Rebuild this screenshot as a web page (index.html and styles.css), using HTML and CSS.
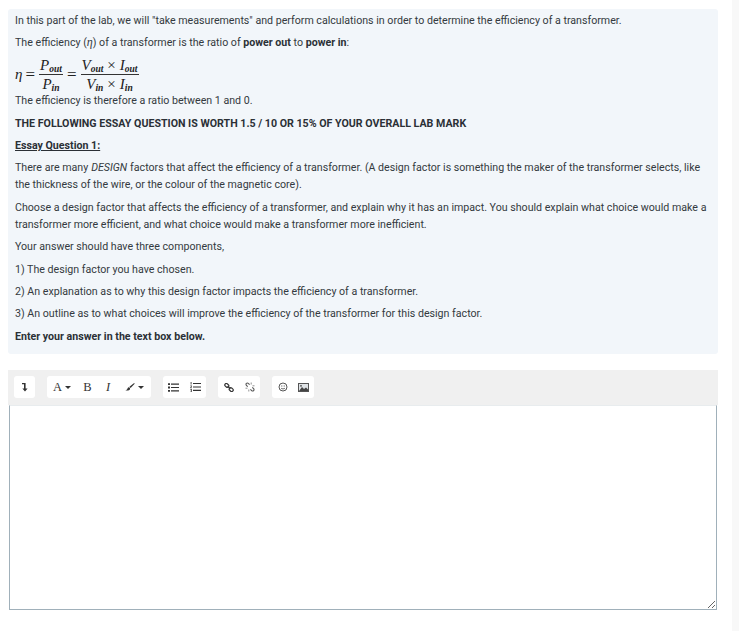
FILE: index.html
```html
<!DOCTYPE html>
<html lang="en">
<head>
    <meta charset="UTF-8">
    <meta name="viewport" content="width=device-width, initial-scale=1.0">
    <title>Essay Question</title>
    <link rel="stylesheet" href="styles.css">
</head>
<body>
    <main class="pagina">
        <section class="questao">
            <p>In this part of the lab, we will "take measurements" and perform calculations in order to determine the efficiency of a transformer.</p>
            <p>The efficiency (<span class="mat">η</span>) of a transformer is the ratio of <strong>power out</strong> to <strong>power in</strong>:</p>

            <div class="formula">
                <span class="mat">η</span>
                <span class="igual">=</span>
                <span class="fracao">
                    <span class="num"><span class="mat">P<sub>out</sub></span></span>
                    <span class="den"><span class="mat">P<sub>in</sub></span></span>
                </span>
                <span class="igual">=</span>
                <span class="fracao">
                    <span class="num"><span class="mat">V<sub>out</sub></span><span class="vezes">×</span><span class="mat">I<sub>out</sub></span></span>
                    <span class="den"><span class="mat">V<sub>in</sub></span><span class="vezes">×</span><span class="mat">I<sub>in</sub></span></span>
                </span>
            </div>

            <p>The efficiency is therefore a ratio between 1 and 0.</p>
            <p><strong>THE FOLLOWING ESSAY QUESTION IS WORTH 1.5 / 10 OR 15% OF YOUR OVERALL LAB MARK</strong></p>
            <p><strong><u>Essay Question 1:</u></strong></p>
            <p>There are many <em>DESIGN</em> factors that affect the efficiency of a transformer. (A design factor is something the maker of the transformer selects, like the thickness of the wire, or the colour of the magnetic core).</p>
            <p>Choose a design factor that affects the efficiency of a transformer, and explain why it has an impact. You should explain what choice would make a transformer more efficient, and what choice would make a transformer more inefficient.</p>
            <p>Your answer should have three components,</p>
            <p>1) The design factor you have chosen.</p>
            <p>2) An explanation as to why this design factor impacts the efficiency of a transformer.</p>
            <p>3) An outline as to what choices will improve the efficiency of the transformer for this design factor.</p>
            <p><strong>Enter your answer in the text box below.</strong></p>
        </section>

        <div class="editor">
            <div class="barra">
                <div class="grupo">
                    <button class="btn" type="button">
                        <svg width="8" height="10" viewBox="0 0 8 10"><path d="M1 1h3.600v5.500H6.600L4 9.500 1.400 6.500h1.600V2.300H1z" fill="#333"/></svg>
                    </button>
                </div>
                <div class="grupo">
                    <button class="btn btn-a" type="button">A<span class="seta"></span></button>
                    <button class="btn btn-b" type="button">B</button>
                    <button class="btn btn-i" type="button">I</button>
                    <button class="btn btn-pincel" type="button">
                        <svg width="10" height="10" viewBox="0 0 12 10"><path d="M11 .3 5.300 4.600 6.700 6.200 11.600 1z M4.600 5.200C3 5.400 3.200 7 2.400 7.900 1.900 8.400 1.200 8.600.4 8.700c1.800 1 4.400.9 5.400-.7.500-.8.300-1.600-.1-2z" fill="#333"/></svg>
                        <span class="seta"></span>
                    </button>
                </div>
                <div class="grupo">
                    <button class="btn btn-lista" type="button">
                        <svg width="11" height="9" viewBox="0 0 11 9"><path d="M0 .3h2v1.800H0zM0 3.600h2v1.800H0zM0 6.900h2v1.800H0zM3 .6h8v1.200H3zM3 3.900h8v1.200H3zM3 7.200h8v1.200H3z" fill="#333"/></svg>
                    </button>
                    <button class="btn btn-lista" type="button">
                        <svg width="11" height="10" viewBox="0 0 11 10"><path d="M3 1h8v1.100H3zM3 4.400h8v1.100H3zM3 7.800h8v1.100H3z" fill="#333"/><path d="M.6 0h1v2.600h-1zM.2 3.600h1.800v1L1.100 5.500h.9v.7H.2v-.9l1-.9v-.1H.2zM.2 7h1.800v3H.2v-.6h1v-.6H.6v-.5h.6v-.6H.2z" fill="#555"/></svg>
                    </button>
                </div>
                <div class="grupo">
                    <button class="btn" type="button">
                        <svg width="10" height="9" viewBox="0 0 10 9"><rect x=".7" y=".9" width="4.200" height="3" rx="1.400" transform="rotate(40 2.800 2.400)" fill="none" stroke="#333" stroke-width="1.200"/><rect x="5.100" y="5.100" width="4.200" height="3" rx="1.400" transform="rotate(40 7.200 6.600)" fill="none" stroke="#333" stroke-width="1.200"/><path d="M3.600 3.200 6.400 5.800" stroke="#333" stroke-width="1.200"/></svg>
                    </button>
                    <button class="btn" type="button">
                        <svg width="10" height="10" viewBox="0 0 10 10"><path d="M4.600 2.700 3.300 1.400a1.300 1.300 0 0 0-1.900 0 1.300 1.300 0 0 0 0 1.900L2.700 4.600M5.400 7.300 6.700 8.600a1.300 1.300 0 0 0 1.900 0 1.300 1.300 0 0 0 0-1.900L7.300 5.400" fill="none" stroke="#555" stroke-width="1.100"/><path d="M6.200.5v2M9.500 3.800H7.500M.5 6.200h2M3.800 9.500v-2" stroke="#777" stroke-width=".8"/></svg>
                    </button>
                </div>
                <div class="grupo">
                    <button class="btn" type="button">
                        <svg width="10" height="10" viewBox="0 0 10 10"><circle cx="5" cy="5" r="4" fill="none" stroke="#444" stroke-width=".9"/><path d="M3 6c.6 1.200 3.400 1.200 4 0" fill="none" stroke="#444" stroke-width=".8"/><path d="M3.300 3.400h1v1h-1zM5.700 3.400h1v1h-1z" fill="#444"/></svg>
                    </button>
                    <button class="btn" type="button">
                        <svg width="11" height="9" viewBox="0 0 11 9"><path d="M0 0h11v9H0z" fill="#555"/><path d="M1 1h9v7H1z" fill="#dfe3e6"/><path d="M1 8 4 4l2 2 2-1.500L10 6.500V8z" fill="#444"/><circle cx="3" cy="2.800" r=".9" fill="#444"/></svg>
                    </button>
                </div>
            </div>
            <textarea class="resposta"></textarea>
        </div>
    </main>
    <div class="faixa"></div>
</body>
</html>
```

FILE: styles.css
```css
html, body {
    height: 100%;
}

body {
    margin: 0;
    background-color: #fff;
    font-family: Roboto, "Liberation Sans", sans-serif;
    font-size: 10.65px;
    line-height: 17px;
    color: #343a40;
    display: flex;
    overflow: hidden;
}

.pagina {
    width: 710px;
    margin-left: 8px;
    padding-top: 9px;
}

.faixa {
    width: 7px;
    margin-left: 14px;
    background-color: #f8f8f8;
}

.questao {
    background-color: #f2f6fa;
    border-radius: 3px;
    padding: 3px 7px 8px;
    height: 345px;
    box-sizing: border-box;
}

.questao p {
    margin: 0 0 5.4px;
}

.questao strong {
    color: #2b3036;
    font-weight: 700;
}

.questao em {
    margin: 0 0.3px;
}

.mat {
    font-family: "Liberation Serif", serif;
    font-style: italic;
    font-size: 12px;
}

.mat sub {
    font-size: 9.500px;
    font-weight: 700;
    line-height: 0;
    vertical-align: -2px;
}

.formula {
    display: flex;
    align-items: center;
    height: 36.500px;
    margin-top: -1px;
    font-family: "Liberation Serif", serif;
    font-size: 15px;
    color: #222;
}

.formula .mat {
    font-size: 15px;
}

.formula .igual {
    font-size: 17px;
    padding: 0 4px 0 3px;
}

.fracao {
    display: inline-flex;
    flex-direction: column;
    align-items: center;
    line-height: 18px;
    margin-right: 1px;
}

.fracao .num {
    padding: 0 1px;
    border-bottom: 1px solid #333;
}

.vezes {
    margin: 0 4px;
}

.editor {
    margin-top: 16px;
}

.barra {
    display: flex;
    gap: 12px;
    height: 35px;
    padding: 6px 6px 7px;
    box-sizing: border-box;
    background-color: #f0f0f0;
}

.grupo {
    display: flex;
    background-color: #fff;
    border-radius: 3px;
}

.btn {
    display: flex;
    align-items: center;
    justify-content: center;
    gap: 3px;
    border: none;
    background: none;
    padding: 0;
    width: 21px;
    color: #333;
    font-family: "Liberation Serif", serif;
    font-size: 12.500px;
}

.btn-a {
    width: 30px;
}

.btn-i {
    width: 20px;
    font-style: italic;
}

.btn-pincel {
    width: 33px;
}

.btn-lista {
    width: 21.500px;
}

.seta {
    width: 0;
    height: 0;
    border-left: 3px solid transparent;
    border-right: 3px solid transparent;
    border-top: 3px solid #333;
}

.resposta {
    display: block;
    width: 708px;
    height: 205px;
    margin: 0 auto;
    box-sizing: border-box;
    border: 1px solid #a0b0ba;
    border-top-color: #e8ecee;
    background-color: #fff;
    padding: 4px;
}
```
